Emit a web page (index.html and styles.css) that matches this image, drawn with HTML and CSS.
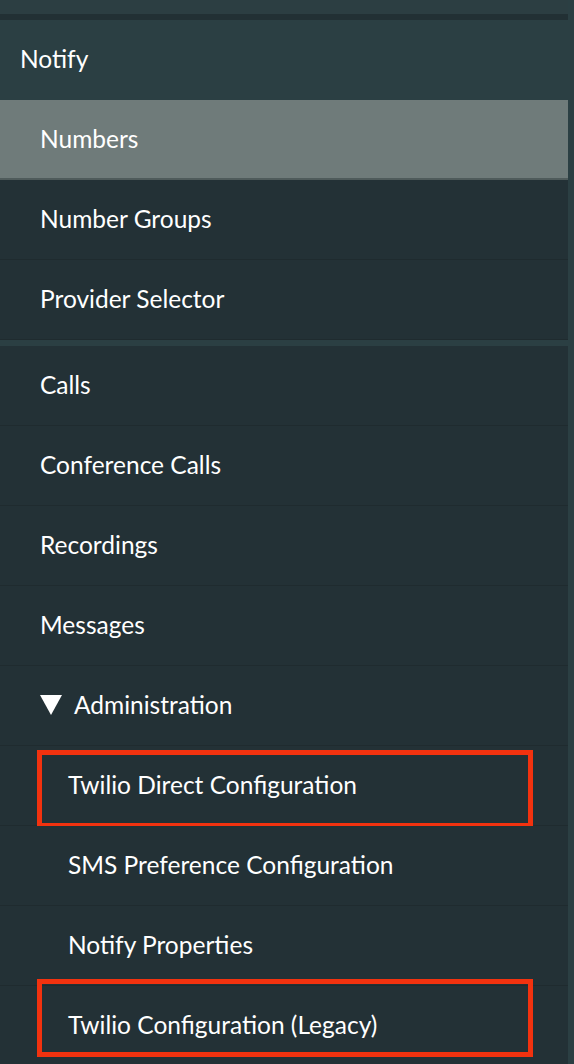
FILE: index.html
```html
<!DOCTYPE html>
<html>
<head>
<meta charset="utf-8">
<link rel="stylesheet" href="styles.css">
</head>
<body>
<nav class="sidebar">
  <div class="topband"></div>
  <div class="topline"></div>
  <div class="group-title">Notify</div>
  <ul class="menu">
    <li class="item active">Numbers</li>
    <li class="item">Number Groups</li>
    <li class="item">Provider Selector</li>
  </ul>
  <div class="divider"></div>
  <ul class="menu">
    <li class="item">Calls</li>
    <li class="item">Conference Calls</li>
    <li class="item">Recordings</li>
    <li class="item">Messages</li>
    <li class="item section"><svg class="caret" width="22" height="20" viewBox="0 0 22 20"><polygon points="0,0 22,0 11,20" fill="#ffffff"/></svg>Administration</li>
    <li class="item sub mark mark-a">Twilio Direct Configuration</li>
    <li class="item sub">SMS Preference Configuration</li>
    <li class="item sub">Notify Properties</li>
    <li class="item sub mark mark-b">Twilio Configuration (Legacy)</li>
  </ul>
</nav>
</body>
</html>
```

FILE: styles.css
```css
html, body {
  margin: 0;
  padding: 0;
  background: #2b3e42;
  height: 1064px;
  overflow: hidden;
}
.sidebar {
  width: 568px;
  border-right: 2px solid #2b3f43;
  background: #233136;
  font-family: Lato, "Open Sans", sans-serif;
  color: #ffffff;
  font-size: 24.5px;
}
.topband {
  height: 14px;
  background: #2c3e42;
}
.topline {
  height: 6px;
  background: #223034;
}
.group-title {
  height: 80px;
  line-height: 78px;
  padding-left: 20px;
  background: #2b3f43;
}
.menu {
  list-style: none;
  margin: 0;
  padding: 0;
}
.item {
  position: relative;
  box-sizing: border-box;
  height: 80px;
  padding-left: 40px;
  padding-bottom: 2px;
  border-bottom: 1px solid #1f2b2f;
  background: #233136;
  display: flex;
  align-items: center;
}
.item.active {
  background: #6f7b7a;
  border-bottom: 2px solid #4f5b5b;
}
.divider {
  height: 6px;
  background: #2b3f43;
}
.section .caret {
  margin-right: 12px;
}
.item.sub {
  padding-left: 68px;
}
.mark::after {
  content: "";
  position: absolute;
  left: 37px;
  right: 35px;
  border: 5px solid #f2320f;
  pointer-events: none;
}
.mark-a::after {
  top: 4px;
  bottom: -3px;
}
.mark-b::after {
  top: -7px;
  bottom: 8px;
}
```
